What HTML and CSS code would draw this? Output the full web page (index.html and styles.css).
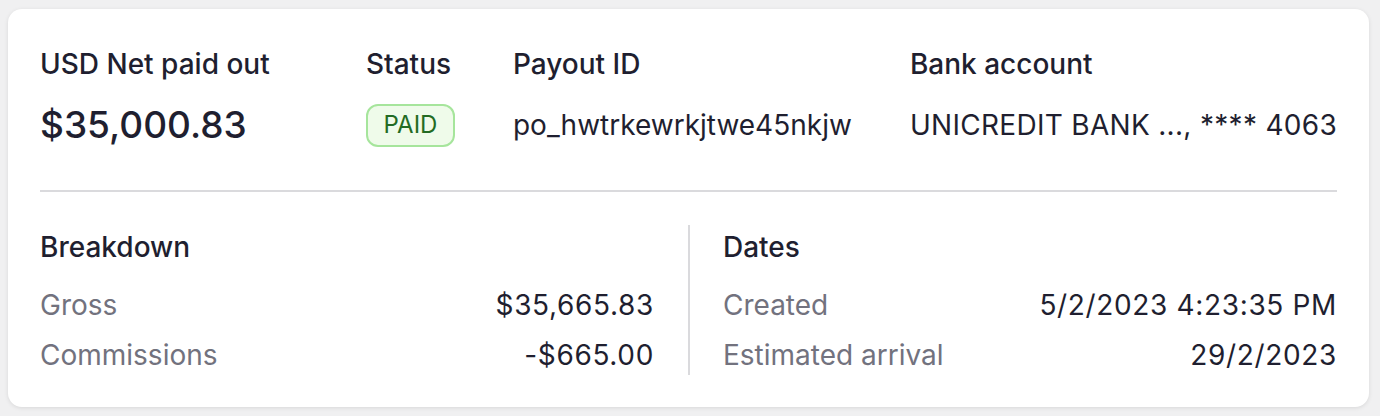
FILE: index.html
```html
<!DOCTYPE html>
<html>
<head>
<meta charset="utf-8">
<link rel="stylesheet" href="styles.css">
</head>
<body>
<div class="card">
  <div class="summary">
    <div class="col col-amount">
      <div class="label">USD Net paid out</div>
      <div class="amount">$35,000.83</div>
    </div>
    <div class="col col-status">
      <div class="label">Status</div>
      <div class="value"><span class="badge">PAID</span></div>
    </div>
    <div class="col col-id">
      <div class="label">Payout ID</div>
      <div class="value">po_hwtrkewrkjtwe45nkjw</div>
    </div>
    <div class="col col-bank">
      <div class="label">Bank account</div>
      <div class="value">UNICREDIT BANK ..., **** 4063</div>
    </div>
  </div>
  <div class="divider"></div>
  <div class="details">
    <div class="section section-left">
      <div class="section-title">Breakdown</div>
      <div class="row"><span class="key">Gross</span><span class="val">$35,665.83</span></div>
      <div class="row"><span class="key">Commissions</span><span class="val">-$665.00</span></div>
    </div>
    <div class="vline"></div>
    <div class="section section-right">
      <div class="section-title">Dates</div>
      <div class="row"><span class="key">Created</span><span class="val">5/2/2023 4:23:35 PM</span></div>
      <div class="row"><span class="key">Estimated arrival</span><span class="val">29/2/2023</span></div>
    </div>
  </div>
</div>
</body>
</html>
```
FILE: styles.css
```css
html, body {
  margin: 0;
  padding: 0;
}
body {
  background: #f0f0f1;
  font-family: Inter, "Noto Sans", sans-serif;
  color: #1f1f30;
  padding: 9px 11px 9px 8px;
}
.card {
  background: #ffffff;
  border-radius: 14px;
  box-shadow: 0 1px 4px rgba(0, 0, 0, 0.10);
  height: 398px;
  box-sizing: border-box;
  padding: 40px 32px 0 32px;
}
.summary {
  display: flex;
  align-items: flex-start;
}
.col {
  display: flex;
  flex-direction: column;
}
.col-amount { width: 326px; }
.col-status { width: 147px; }
.col-id { width: 397px; }
.label {
  font-size: 28px;
  font-weight: 500;
  line-height: 30px;
  height: 30px;
  white-space: nowrap;
}
.amount {
  margin-top: 26px;
  font-size: 37px;
  font-weight: 500;
  line-height: 40px;
  height: 40px;
  white-space: nowrap;
}
.value {
  margin-top: 26px;
  font-size: 28px;
  font-weight: 400;
  line-height: 40px;
  height: 40px;
  display: flex;
  align-items: center;
  white-space: nowrap;
}
.col-bank .value { letter-spacing: 0.3px; }
.badge {
  display: inline-flex;
  align-items: center;
  justify-content: center;
  box-sizing: border-box;
  width: 89px;
  height: 43px;
  border: 2px solid #a6e59c;
  background: #effbea;
  color: #236b23;
  border-radius: 12px;
  font-size: 24px;
  font-weight: 400;
}
.divider {
  margin-top: 45px;
  height: 2px;
  background: #dadadd;
}
.details {
  display: flex;
  margin-top: 33px;
}
.section {
  flex: 1;
  display: flex;
  flex-direction: column;
}
.section-left { padding-right: 34px; }
.section-right { padding-left: 33px; }
.vline {
  width: 2px;
  background: #dadadd;
  height: 150px;
}
.section-title {
  font-size: 28px;
  font-weight: 500;
  line-height: 44px;
  height: 44px;
}
.row {
  display: flex;
  justify-content: space-between;
  font-size: 28px;
  line-height: 50px;
  height: 50px;
  white-space: nowrap;
}
.section-title + .row { margin-top: 11px; }
.key { color: #72727e; }
.val {
  color: #1f1f30;
  letter-spacing: 0.65px;
}
```
